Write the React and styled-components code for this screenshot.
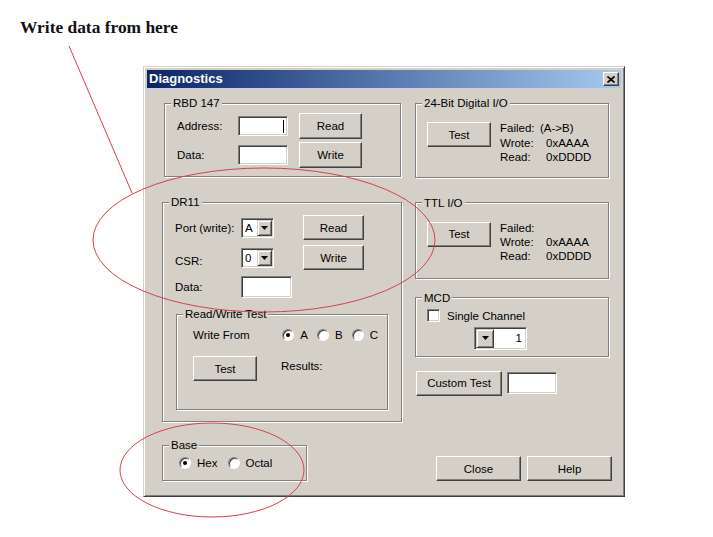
import React from "react";
import styled, { createGlobalStyle } from "styled-components";

const GlobalStyle = createGlobalStyle`
  html, body { margin: 0; padding: 0; background: #fff; }
  body { font-family: "Liberation Sans", Arial, sans-serif; }
`;

const Page = styled.div`
  position: relative;
  width: 713px;
  height: 537px;
  overflow: hidden;
  background: #fff;
`;

const Caption = styled.div`
  padding: 17px 0 0 20px;
  font-family: "Liberation Serif", "Times New Roman", serif;
  font-weight: bold;
  font-size: 17.4px;
  line-height: 20px;
  color: #111;
`;

const Window = styled.div`
  box-sizing: border-box;
  margin: 29px 0 0 143px;
  width: 482px;
  height: 431px;
  display: flex;
  flex-direction: column;
  padding: 3px;
  background: #d4d0c8;
  border: 1px solid;
  border-color: #d4d0c8 #404040 #404040 #d4d0c8;
  box-shadow: inset 1px 1px #fff, inset -1px -1px #808080;
  font-size: 11.5px;
  line-height: 14px;
  color: #000;
`;

const TitleBar = styled.div`
  height: 18px;
  flex: none;
  display: flex;
  align-items: center;
  justify-content: space-between;
  padding: 0 2px;
  background: linear-gradient(to right, #0a246a, #a6caf0);
`;

const Title = styled.span`
  color: #fff;
  font-weight: bold;
  font-size: 13px;
`;

const CloseBox = styled.div`
  box-sizing: border-box;
  width: 16px;
  height: 14px;
  display: flex;
  align-items: center;
  justify-content: center;
  background: #d4d0c8;
  border: 1px solid;
  border-color: #fff #404040 #404040 #fff;
  box-shadow: inset -1px -1px #808080;
`;

const Body = styled.div`
  flex: 1;
  display: grid;
  grid-template-columns: 239px 194px;
  column-gap: 14px;
  padding: 8px 0 13px 15px;
`;

const Column = styled.div`
  display: flex;
  flex-direction: column;
  align-items: flex-start;
`;

const Group = styled.fieldset`
  box-sizing: border-box;
  margin: ${(p) => p.$mt || 0}px 0 0 ${(p) => p.$ml || 0}px;
  padding: 0;
  width: ${(p) => p.$w}px;
  min-width: 0;
  border: 1px solid #808080;
  box-shadow: 1px 1px 0 #fff, inset 1px 1px 0 #fff;
`;

const Legend = styled.legend`
  margin-left: 6px;
  padding: 0 2px;
  background: #d4d0c8;
  line-height: 14px;
`;

const GroupBody = styled.div`
  padding: ${(p) => p.$pad};
`;

const FormGrid = styled.div`
  display: grid;
  grid-template-columns: ${(p) => p.$cols};
  grid-template-rows: ${(p) => p.$rows};
  column-gap: 11px;
  row-gap: ${(p) => p.$rowGap}px;
  align-items: center;
`;

const Label = styled.span`
  white-space: nowrap;
  padding-top: ${(p) => p.$drop || 0}px;
`;

const Button = styled.div`
  box-sizing: border-box;
  width: ${(p) => p.$w}px;
  height: ${(p) => p.$h || 25}px;
  display: flex;
  align-items: center;
  justify-content: center;
  background: #d4d0c8;
  border: 1px solid;
  border-color: #fff #404040 #404040 #fff;
  box-shadow: inset -1px -1px #808080;
  white-space: nowrap;
`;

const Field = styled.div`
  box-sizing: border-box;
  width: ${(p) => p.$w}px;
  height: ${(p) => p.$h || 20}px;
  display: flex;
  align-items: center;
  justify-content: flex-end;
  padding-right: 3px;
  background: #fff;
  border: 1px solid;
  border-color: #808080 #fff #fff #808080;
  box-shadow: inset 1px 1px #404040, inset -1px -1px #d4d0c8;
`;

const Caret = styled.span`
  width: 1px;
  height: 13px;
  background: #000;
`;

const Combo = styled.div`
  box-sizing: border-box;
  width: 33px;
  height: 20px;
  display: flex;
  align-items: center;
  padding: 1px;
  background: #fff;
  border: 1px solid;
  border-color: #808080 #fff #fff #808080;
  box-shadow: inset 1px 1px #404040, inset -1px -1px #d4d0c8;
`;

const ComboText = styled.span`
  flex: 1;
  padding-left: 2px;
`;

const ArrowBox = styled.div`
  box-sizing: border-box;
  width: ${(p) => p.$w || 15}px;
  height: ${(p) => p.$h || 16}px;
  display: flex;
  align-items: center;
  justify-content: center;
  background: #d4d0c8;
  border: 1px solid;
  border-color: #d4d0c8 #404040 #404040 #d4d0c8;
  box-shadow: inset 1px 1px #fff, inset -1px -1px #808080;
`;

const Row = styled.div`
  display: flex;
  align-items: ${(p) => p.$align || "center"};
  gap: ${(p) => p.$gap || 0}px;
  margin-top: ${(p) => p.$mt || 0}px;
  margin-left: ${(p) => p.$ml || 0}px;
  height: ${(p) => (p.$h ? `${p.$h}px` : "auto")};
`;

const WriteFromLabel = styled.span`
  width: 90px;
`;

const RadioItem = styled.span`
  display: flex;
  align-items: center;
  gap: ${(p) => p.$gap || 6}px;
  margin-right: ${(p) => p.$space || 9}px;
`;

const RadioDot = styled.span`
  box-sizing: border-box;
  width: 12px;
  height: 12px;
  border-radius: 50%;
  display: flex;
  align-items: center;
  justify-content: center;
  background: #fff;
  border: 1px solid;
  border-color: #808080 #fff #fff #808080;
  box-shadow: inset 1px 1px #404040;
  &::after {
    content: "";
    display: ${(p) => (p.$on ? "block" : "none")};
    width: 4px;
    height: 4px;
    border-radius: 50%;
    background: #000;
  }
`;

const CheckBox = styled.span`
  box-sizing: border-box;
  width: 13px;
  height: 13px;
  background: #fff;
  border: 1px solid;
  border-color: #808080 #fff #fff #808080;
  box-shadow: inset 1px 1px #404040, inset -1px -1px #d4d0c8;
`;

const Results = styled.span`
  align-self: flex-start;
  padding-top: 3px;
`;

const Readout = styled.div`
  display: grid;
  grid-template-columns: 40px auto;
  line-height: ${(p) => p.$lh}px;
  margin-top: -1px;
`;

const Value = styled.span`
  padding-left: ${(p) => p.$indent || 0}px;
  white-space: nowrap;
`;

const Spin = styled.div`
  box-sizing: border-box;
  width: 53px;
  height: 23px;
  display: flex;
  align-items: center;
  padding: 1px 4px 1px 1px;
  background: #fff;
  border: 1px solid;
  border-color: #808080 #fff #fff #808080;
  box-shadow: inset 1px 1px #404040, inset -1px -1px #d4d0c8;
`;

const SpinValue = styled.span`
  flex: 1;
  text-align: right;
`;

const Footer = styled.div`
  margin-top: auto;
  margin-right: -3px;
  align-self: stretch;
  display: flex;
  justify-content: flex-end;
  gap: 6px;
`;

const Overlay = styled.svg`
  position: absolute;
  left: 0;
  top: 0;
  pointer-events: none;
  fill: none;
  stroke: #d8404c;
  stroke-width: 1;
`;

const DownArrow = () => (
  <svg width="7" height="4" viewBox="0 0 7 4">
    <path d="M0 0h7L3.5 4z" fill="#000" />
  </svg>
);

const Radio = ({ on, label, gap, space }) => (
  <RadioItem $gap={gap} $space={space}>
    <RadioDot $on={on} />
    {label}
  </RadioItem>
);

const Readings = ({ failed, lh }) => (
  <Readout $lh={lh}>
    <span>Failed:</span>
    <Value>{failed}</Value>
    <span>Wrote:</span>
    <Value $indent={6}>0xAAAA</Value>
    <span>Read:</span>
    <Value $indent={6}>0xDDDD</Value>
  </Readout>
);

const App = () => {
  return (
    <Page>
      <GlobalStyle />
      <Caption>Write data from here</Caption>
      <Window>
        <TitleBar>
          <Title>Diagnostics</Title>
          <CloseBox>
            <svg width="8" height="7" viewBox="0 0 8 7">
              <path d="M0.5 0.5L7.5 6.5M7.5 0.5L0.5 6.5" stroke="#000" strokeWidth="1.8" />
            </svg>
          </CloseBox>
        </TitleBar>
        <Body>
          <Column>
            <Group $ml={2} $w={237}>
              <Legend>RBD 147</Legend>
              <GroupBody $pad="3px 0 8px 12px">
                <FormGrid $cols="50px 50px 63px" $rows="26px 26px" $rowGap={3}>
                  <Label>Address:</Label>
                  <Field $w={50}>
                    <Caret />
                  </Field>
                  <Button $w={63} $h={26}>Read</Button>
                  <Label>Data:</Label>
                  <Field $w={50} />
                  <Button $w={63} $h={26}>Write</Button>
                </FormGrid>
              </GroupBody>
            </Group>

            <Group $mt={18} $w={240}>
              <Legend>DR11</Legend>
              <GroupBody $pad="6px 0 11px 12px">
                <FormGrid $cols="55px 51px 61px" $rows="25px 25px 24px" $rowGap={5}>
                  <Label>Port (write):</Label>
                  <Combo>
                    <ComboText>A</ComboText>
                    <ArrowBox><DownArrow /></ArrowBox>
                  </Combo>
                  <Button $w={61}>Read</Button>
                  <Label $drop={6}>CSR:</Label>
                  <Combo>
                    <ComboText>0</ComboText>
                    <ArrowBox><DownArrow /></ArrowBox>
                  </Combo>
                  <Button $w={61}>Write</Button>
                  <Label>Data:</Label>
                  <Field $w={51} $h={22} />
                  <span />
                </FormGrid>

                <Group $mt={8} $ml={1} $w={212}>
                  <Legend>Read/Write Test</Legend>
                  <GroupBody $pad="6px 0 28px 16px">
                    <Row $h={16}>
                      <WriteFromLabel>Write From</WriteFromLabel>
                      <Radio on label="A" />
                      <Radio label="B" />
                      <Radio label="C" />
                    </Row>
                    <Row $mt={13} $gap={24}>
                      <Button $w={64}>Test</Button>
                      <Results>Results:</Results>
                    </Row>
                  </GroupBody>
                </Group>
              </GroupBody>
            </Group>

            <Group $mt={16} $w={145}>
              <Legend>Base</Legend>
              <GroupBody $pad="4px 0 10px 16px">
                <Row $h={14}>
                  <Radio on label="Hex" space={11} />
                  <Radio label="Octal" gap={5} />
                </Row>
              </GroupBody>
            </Group>
          </Column>

          <Column>
            <Group $w={194}>
              <Legend>24-Bit Digital I/O</Legend>
              <GroupBody $pad="12px 0 12px 11px">
                <Row $align="flex-start" $gap={9}>
                  <Button $w={64}>Test</Button>
                  <Readings failed="(A->B)" lh={14.5} />
                </Row>
              </GroupBody>
            </Group>

            <Group $mt={18} $w={194}>
              <Legend>TTL I/O</Legend>
              <GroupBody $pad="12px 0 15px 11px">
                <Row $align="flex-start" $gap={9}>
                  <Button $w={64}>Test</Button>
                  <Readings failed="" lh={14} />
                </Row>
              </GroupBody>
            </Group>

            <Group $mt={12} $w={194}>
              <Legend>MCD</Legend>
              <GroupBody $pad="4px 0 6px 11px">
                <Row $gap={7}>
                  <CheckBox />
                  <span>Single Channel</span>
                </Row>
                <Row $mt={4} $ml={47}>
                  <Spin>
                    <ArrowBox $w={18} $h={19}><DownArrow /></ArrowBox>
                    <SpinValue>1</SpinValue>
                  </Spin>
                </Row>
              </GroupBody>
            </Group>

            <Row $mt={14} $ml={1} $gap={5}>
              <Button $w={86}>Custom Test</Button>
              <Field $w={50} $h={22} />
            </Row>

            <Footer>
              <Button $w={85}>Close</Button>
              <Button $w={85}>Help</Button>
            </Footer>
          </Column>
        </Body>
      </Window>

      <Overlay width="713" height="537" viewBox="0 0 713 537">
        <line x1="69" y1="46" x2="132" y2="193" />
        <ellipse cx="264" cy="240" rx="171" ry="72" />
        <ellipse cx="212" cy="470" rx="92" ry="47" />
      </Overlay>
    </Page>
  );
};

export default App;
